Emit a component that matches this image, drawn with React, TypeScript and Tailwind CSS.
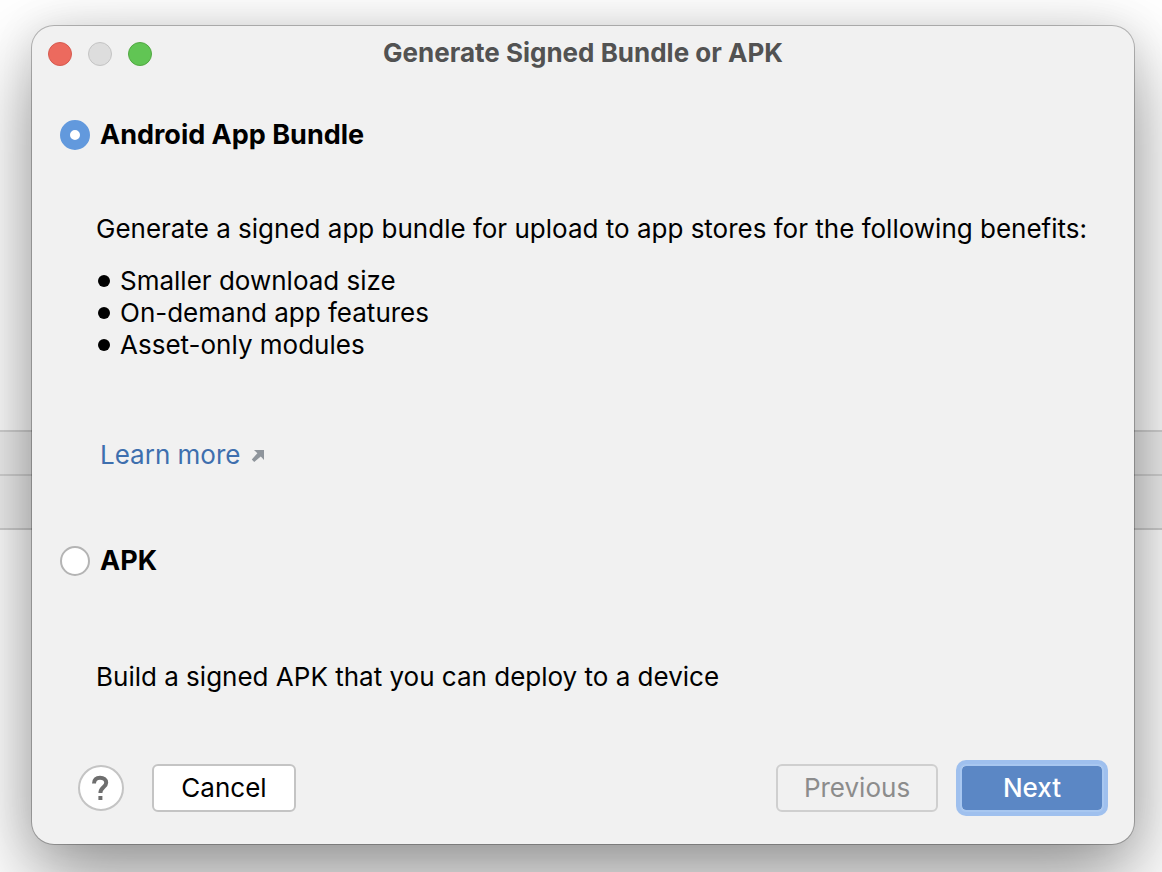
import { useState } from "react";

const benefits = ["Smaller download size", "On-demand app features", "Asset-only modules"];

function Backdrop() {
  return (
    <div aria-hidden="true" className="col-start-1 row-start-1 flex flex-col bg-white">
      <div className="h-[430px]" />
      <div className="h-[46px] border-y-2 border-[#d4d4d4] bg-[#f0f0f0]" />
      <div className="h-[54px] border-b-2 border-[#d0d0d0] bg-[#f0f0f0]" />
    </div>
  );
}

function TitleBar() {
  return (
    <header className="grid h-[54px] grid-cols-[1fr_auto_1fr] items-center px-4">
      <div className="flex gap-4 pt-[2px]">
        <button type="button" aria-label="Close" className="size-6 rounded-full border border-[#d65a4f] bg-[#ec6a5e]" />
        <button type="button" aria-label="Minimize" disabled className="size-6 rounded-full border border-[#c4c4c4] bg-[#dddddd]" />
        <button type="button" aria-label="Zoom" className="size-6 rounded-full border border-[#52a842] bg-[#61c554]" />
      </div>
      <h1 className="text-[26px] leading-8 font-bold text-[#525252]">Generate Signed Bundle or APK</h1>
    </header>
  );
}

type OptionProps = { id: string; label: string; checked: boolean; onSelect: () => void };

function Option({ id, label, checked, onSelect }: OptionProps) {
  return (
    <div className="flex h-8 items-center gap-[10px] px-7">
      <input
        id={id}
        type="radio"
        name="artifact"
        checked={checked}
        onChange={onSelect}
        className="size-[30px] appearance-none rounded-full border-2 border-[#b4b4b4] bg-white checked:border-[10px] checked:border-[#6299dd]"
      />
      <label htmlFor={id} className="text-[27px] font-bold">
        {label}
      </label>
    </div>
  );
}

export default function App() {
  const [artifact, setArtifact] = useState("bundle");
  return (
    <div className="grid min-h-screen overflow-hidden font-['Inter',sans-serif] text-[26px] leading-8 text-black">
      <Backdrop />
      <main className="z-10 col-start-1 row-start-1 mt-[26px] mr-7 mb-7 ml-8 flex flex-col rounded-[22px] bg-[#f1f1f1] shadow-[0_0_0_1px_rgba(0,0,0,0.25),0_36px_80px_rgba(0,0,0,0.4),0_0_40px_rgba(0,0,0,0.1)]">
        <TitleBar />
        <form className="flex flex-1 flex-col pt-[39px]" onSubmit={(e) => e.preventDefault()}>
          <Option id="bundle" label="Android App Bundle" checked={artifact === "bundle"} onSelect={() => setArtifact("bundle")} />
          <p className="mt-[62px] pl-16">Generate a signed app bundle for upload to app stores for the following benefits:</p>
          <ul className="mt-5 pl-[66px]">
            {benefits.map((benefit) => (
              <li key={benefit} className="flex items-center gap-[10px]">
                <span className="size-3 rounded-full bg-black" />
                {benefit}
              </li>
            ))}
          </ul>
          <a href="#learn-more" className="mt-[78px] ml-[68px] flex items-center gap-[11px] self-start text-[#3e6fae]">
            Learn more
            <svg width="14" height="14" viewBox="0 0 14 14" aria-hidden="true">
              <path d="M3 2H13V12L9.8 8.6L3.2 14L0.8 11.6L6.4 5.2Z" fill="#8f959c" />
            </svg>
          </a>
          <div className="mt-[74px]">
            <Option id="apk" label="APK" checked={artifact === "apk"} onSelect={() => setArtifact("apk")} />
          </div>
          <p className="mt-[84px] pl-16">Build a signed APK that you can deploy to a device</p>
          <footer className="mt-auto flex items-center pt-8 pr-[30px] pb-8 pl-[46px]">
            <button
              type="button"
              aria-label="Help"
              className="flex size-[46px] items-center justify-center rounded-full border-2 border-[#c4c4c4] bg-white text-[#6e6e6e]"
            >
              <svg width="18" height="26" viewBox="0 0 18 26" aria-hidden="true">
                <path d="M2 8.5C2 4.8 4.2 2.8 8 2.8C11.8 2.8 14.2 4.8 14.2 7.8C14.2 12 8.4 12.2 8.4 18" fill="none" stroke="currentColor" strokeWidth="4" />
                <path d="M6.4 21H10.4V25H6.4Z" fill="currentColor" />
              </svg>
            </button>
            <button type="button" className="ml-7 h-12 w-36 rounded-md border-2 border-[#c4c4c4] bg-white">
              Cancel
            </button>
            <button type="button" disabled className="ml-auto h-12 w-[162px] rounded-md border-2 border-[#cfcfcf] text-[#8c8c8c]">
              Previous
            </button>
            <button
              type="submit"
              className="ml-[22px] h-12 w-36 rounded-md border-2 border-[#a8c7f0] bg-[#5b87c5] bg-clip-padding font-medium text-white ring-4 ring-[#9fc0ee]"
            >
              Next
            </button>
          </footer>
        </form>
      </main>
    </div>
  );
}
